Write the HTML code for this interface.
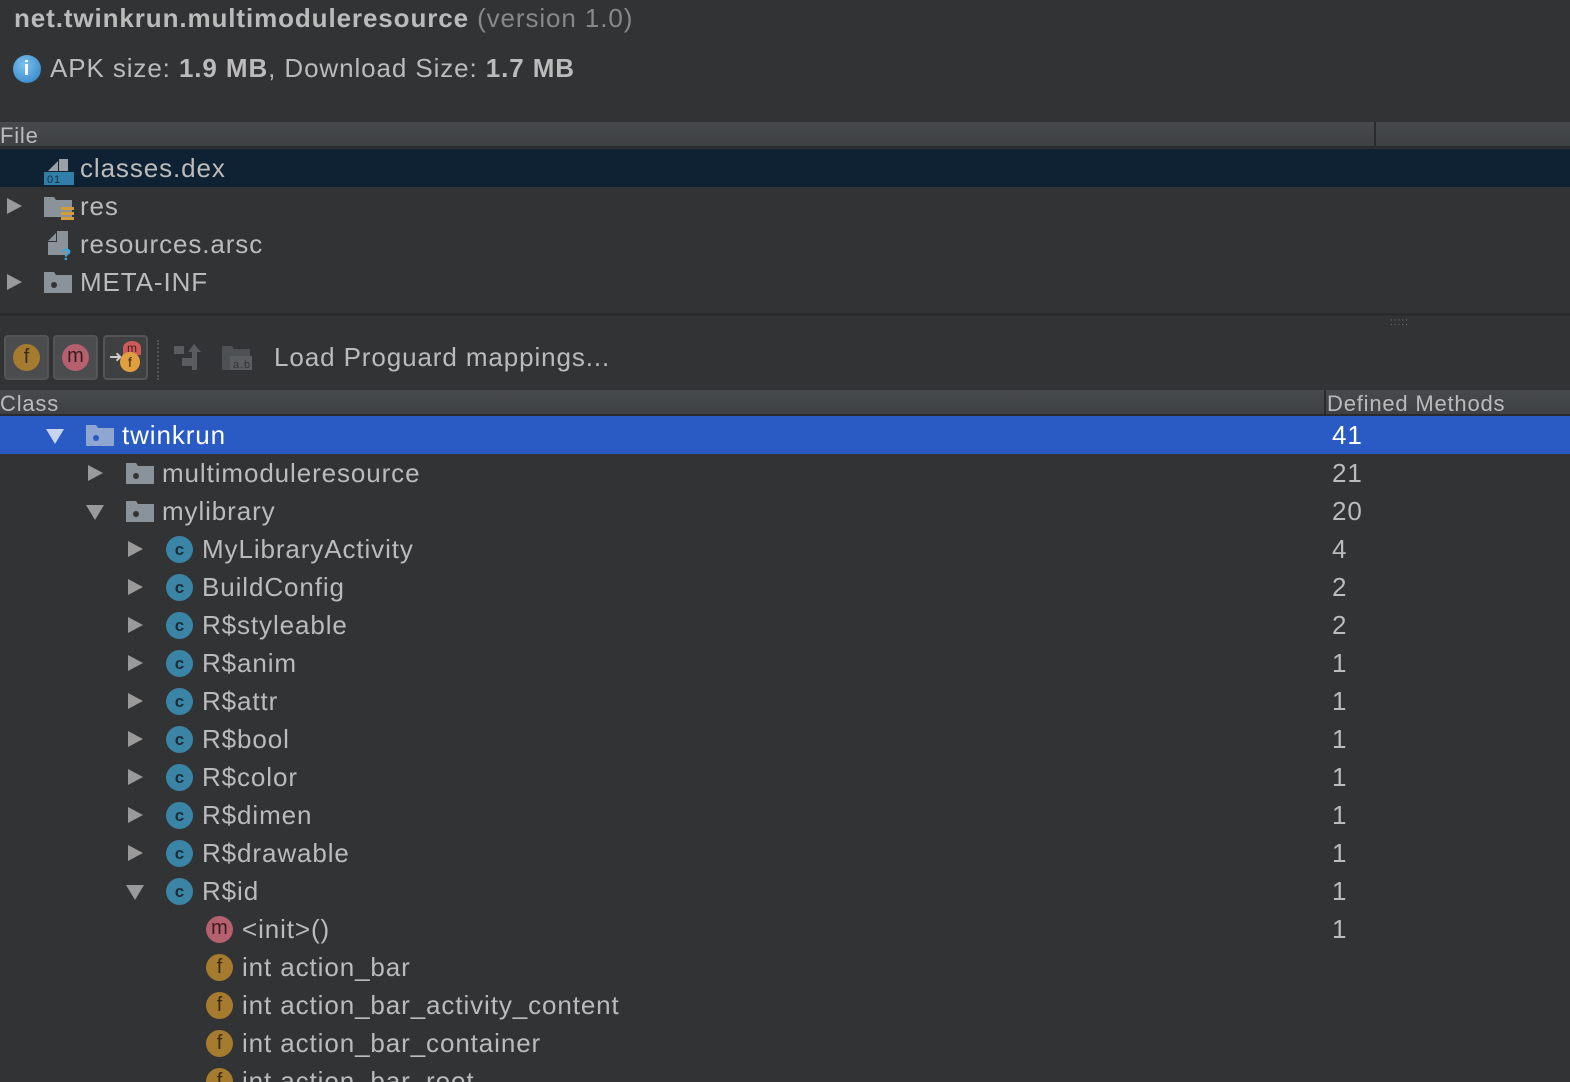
<!DOCTYPE html>
<html style="width:1570px;height:1082px;overflow:hidden"><head><meta charset="utf-8"><style>
*{margin:0;padding:0;box-sizing:border-box}
body{width:1570px;height:1082px;background:#323335;font-family:"Liberation Sans",sans-serif;color:#bbbbbb;position:relative;overflow:hidden;font-size:26px;letter-spacing:0.9px}
.abs{position:absolute}
.row{position:absolute;left:0;width:1570px;height:38px}
.row .t{position:absolute;top:4px;white-space:nowrap}
.arr{position:absolute;top:11px;width:0;height:0;border-top:8px solid transparent;border-bottom:8px solid transparent;border-left:15px solid #9a9a9a}
.arrd{position:absolute;top:13px;width:0;height:0;border-left:9px solid transparent;border-right:9px solid transparent;border-top:15px solid #9a9a9a}
.c{position:absolute;top:6px;width:27px;height:27px;border-radius:50%;background:#3a84a6;color:#1d2d36;font-size:17px;text-align:center;line-height:27px;font-weight:bold;letter-spacing:0}
.m{background:#b4606e;color:#3a1c20;font-weight:normal;font-size:20px;line-height:25px}
.f{background:#a57b30;color:#3a2a10;font-weight:normal;font-size:20px;line-height:26px}
.fold{position:absolute;top:9px;width:28px;height:21px}
.num{position:absolute;left:1332px;top:4px}
.hdr{position:absolute;left:0;width:1570px;height:26px;background:linear-gradient(#474a4c,#3e4143);border-bottom:2px solid #2a2b2c;font-size:22px;color:#bbb;letter-spacing:0.8px}
</style></head><body>
<div class="abs" style="left:14px;top:3px;font-size:26px"><b style="color:#bbb">net.twinkrun.multimoduleresource</b> <span style="color:#888">(version 1.0)</span></div>
<div class="abs" style="left:13px;top:55px;width:28px;height:28px;border-radius:50%;background:radial-gradient(circle at 40% 35%,#7cc0ee,#2a7ec4);color:#fff;text-align:center;font-weight:bold;font-size:20px;line-height:28px">i</div>
<div class="abs" style="left:50px;top:53px">APK size: <b>1.9 MB</b>, Download Size: <b>1.7 MB</b></div>

<div class="hdr" style="top:122px"><span style="position:absolute;left:0;top:1px">File</span><span style="position:absolute;left:1374px;top:0;width:2px;height:24px;background:#2a2b2c"></span></div>
<div class="row" style="top:149px;background:#0f2233">
 <svg class="abs" style="left:44px;top:6px" width="30" height="30"><path d="M4 16 L14 6 L14 16Z M15 4 L24 4 L24 16 L15 16Z" fill="#9aa0a5"/><rect x="0" y="17" width="30" height="13" fill="#2f7fa8"/><text x="3" y="28" font-size="11" fill="#1a3040" font-family="Liberation Sans">01</text></svg>
 <span class="t" style="left:80px">classes.dex</span></div>
<div class="row" style="top:187px"><span class="arr" style="left:7px"></span>
 <svg class="abs" style="left:44px;top:8px" width="32" height="28"><path d="M0 2 H10 L12 5 H28 V22 H0Z" fill="#8b939a"/><rect x="17" y="12" width="13" height="3" fill="#d59a3a"/><rect x="17" y="17" width="13" height="3" fill="#d59a3a"/><rect x="17" y="22" width="13" height="3" fill="#d59a3a"/></svg>
 <span class="t" style="left:80px">res</span></div>
<div class="row" style="top:225px">
 <svg class="abs" style="left:44px;top:4px" width="32" height="32"><path d="M4 12 L12 4 L12 12Z M13 2 L24 2 L24 26 L4 26 L4 13 L13 13Z" fill="#8b939a"/><text x="17" y="31" font-size="17" font-weight="bold" fill="#3aa5e0" font-family="Liberation Sans">?</text></svg>
 <span class="t" style="left:80px">resources.arsc</span></div>
<div class="row" style="top:263px"><span class="arr" style="left:7px"></span>
 <svg class="fold" style="left:44px"><path d="M0 0 H10 L12 3 H28 V21 H0Z" fill="#8b939a"/><circle cx="10" cy="13" r="3" fill="#323335"/></svg>
 <span class="t" style="left:80px">META-INF</span></div>
<div class="abs" style="left:0;top:313px;width:1570px;height:3px;background:#2a2b2c"></div>
<div class="abs" style="left:1390px;top:317px;color:#777;font-size:10px;letter-spacing:1px">:::::</div>

<div class="abs" style="left:4px;top:335px;width:45px;height:45px;border:2px solid #555;border-radius:4px;background:#4a4c4e"><div class="c f" style="left:7px;top:7px">f</div></div>
<div class="abs" style="left:53px;top:335px;width:45px;height:45px;border:2px solid #555;border-radius:4px;background:#4a4c4e"><div class="c m" style="left:7px;top:7px">m</div></div>
<div class="abs" style="left:103px;top:335px;width:45px;height:45px;border:2px solid #555;border-radius:4px;background:#3e4042">
 <div class="abs" style="left:4px;top:10px;color:#ccc;font-size:16px">➜</div>
 <div class="abs" style="left:18px;top:4px;width:18px;height:14px;border-radius:50% 50% 0 0;background:#d05a5a;font-size:12px;text-align:center;color:#402020;letter-spacing:0">m</div>
 <div class="abs" style="left:15px;top:15px;width:20px;height:20px;border-radius:50%;background:#e0a040;font-size:14px;text-align:center;line-height:20px;color:#3a2a10;letter-spacing:0">f</div></div>
<div class="abs" style="left:157px;top:340px;height:40px;border-left:2px dotted #555"></div>
<svg class="abs" style="left:172px;top:342px" width="34" height="32"><g fill="#5a5d60"><rect x="2" y="4" width="10" height="8"/><rect x="10" y="16" width="10" height="8"/><path d="M22 2 L29 10 H25 V28 H20 V10 H16Z"/></g></svg>
<svg class="abs" style="left:222px;top:344px" width="32" height="30"><path d="M0 2 H10 L12 5 H28 V26 H0Z" fill="#4e5154"/><rect x="8" y="12" width="22" height="14" fill="#5a5d60"/><text x="11" y="24" font-size="11" fill="#333" font-family="Liberation Sans">a.b</text></svg>
<div class="abs" style="left:274px;top:342px">Load Proguard mappings...</div>

<div class="hdr" style="top:390px"><span style="position:absolute;left:0;top:1px">Class</span><span style="position:absolute;left:1324px;top:0;width:2px;height:24px;background:#2a2b2c"></span><span style="position:absolute;left:1327px;top:1px">Defined Methods</span></div>

<div class="row" style="top:416px;background:#2a5bc5;color:#fff"><span class="arrd" style="left:46px;border-top-color:#c8d4ee"></span>
 <svg class="fold" style="left:86px"><path d="M0 0 H10 L12 3 H28 V21 H0Z" fill="#8fa6d0"/><circle cx="10" cy="13" r="3" fill="#2a5bc5"/></svg>
 <span class="t" style="left:122px">twinkrun</span><span class="num">41</span></div>
<div class="row" style="top:454px"><span class="arr" style="left:88px"></span>
 <svg class="fold" style="left:126px"><path d="M0 0 H10 L12 3 H28 V21 H0Z" fill="#8b939a"/><circle cx="10" cy="13" r="3" fill="#323335"/></svg>
 <span class="t" style="left:162px">multimoduleresource</span><span class="num">21</span></div>
<div class="row" style="top:492px"><span class="arrd" style="left:86px"></span>
 <svg class="fold" style="left:126px"><path d="M0 0 H10 L12 3 H28 V21 H0Z" fill="#8b939a"/><circle cx="10" cy="13" r="3" fill="#323335"/></svg>
 <span class="t" style="left:162px">mylibrary</span><span class="num">20</span></div>

<div class="row" style="top:530px"><span class="arr" style="left:128px"></span><span class="c" style="left:166px">c</span><span class="t" style="left:202px">MyLibraryActivity</span><span class="num">4</span></div>
<div class="row" style="top:568px"><span class="arr" style="left:128px"></span><span class="c" style="left:166px">c</span><span class="t" style="left:202px">BuildConfig</span><span class="num">2</span></div>
<div class="row" style="top:606px"><span class="arr" style="left:128px"></span><span class="c" style="left:166px">c</span><span class="t" style="left:202px">R$styleable</span><span class="num">2</span></div>
<div class="row" style="top:644px"><span class="arr" style="left:128px"></span><span class="c" style="left:166px">c</span><span class="t" style="left:202px">R$anim</span><span class="num">1</span></div>
<div class="row" style="top:682px"><span class="arr" style="left:128px"></span><span class="c" style="left:166px">c</span><span class="t" style="left:202px">R$attr</span><span class="num">1</span></div>
<div class="row" style="top:720px"><span class="arr" style="left:128px"></span><span class="c" style="left:166px">c</span><span class="t" style="left:202px">R$bool</span><span class="num">1</span></div>
<div class="row" style="top:758px"><span class="arr" style="left:128px"></span><span class="c" style="left:166px">c</span><span class="t" style="left:202px">R$color</span><span class="num">1</span></div>
<div class="row" style="top:796px"><span class="arr" style="left:128px"></span><span class="c" style="left:166px">c</span><span class="t" style="left:202px">R$dimen</span><span class="num">1</span></div>
<div class="row" style="top:834px"><span class="arr" style="left:128px"></span><span class="c" style="left:166px">c</span><span class="t" style="left:202px">R$drawable</span><span class="num">1</span></div>
<div class="row" style="top:872px"><span class="arrd" style="left:126px"></span><span class="c" style="left:166px">c</span><span class="t" style="left:202px">R$id</span><span class="num">1</span></div>
<div class="row" style="top:910px"><span class="c m" style="left:206px">m</span><span class="t" style="left:242px">&lt;init&gt;()</span><span class="num">1</span></div>
<div class="row" style="top:948px"><span class="c f" style="left:206px">f</span><span class="t" style="left:242px">int action_bar</span></div>
<div class="row" style="top:986px"><span class="c f" style="left:206px">f</span><span class="t" style="left:242px">int action_bar_activity_content</span></div>
<div class="row" style="top:1024px"><span class="c f" style="left:206px">f</span><span class="t" style="left:242px">int action_bar_container</span></div>
<div class="row" style="top:1062px"><span class="c f" style="left:206px">f</span><span class="t" style="left:242px">int action_bar_root</span></div>
</body></html>
